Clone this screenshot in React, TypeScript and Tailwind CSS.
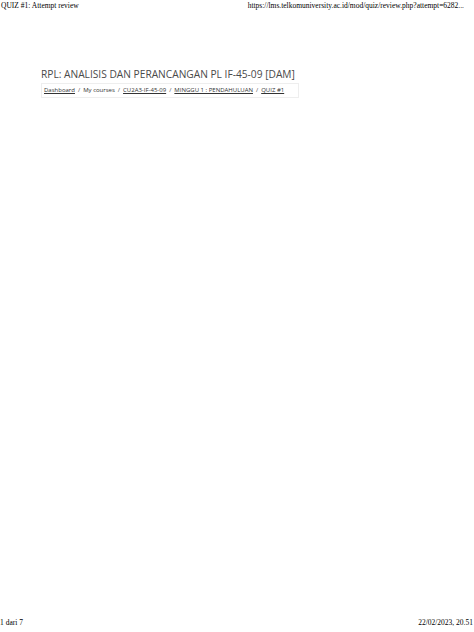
import React from 'react';

const crumbs = [
  { label: 'Dashboard', link: true },
  { label: 'My courses', link: false },
  { label: 'CU2A3-IF-45-09', link: true },
  { label: 'MINGGU 1 : PENDAHULUAN', link: true },
  { label: 'QUIZ #1', link: true },
];

export default function App() {
  return (
    <div className="h-[632px] w-[474px] bg-white flex flex-col overflow-hidden text-black">
      <div className="flex justify-between items-start h-[12px] pt-px font-['Liberation_Serif',serif] text-[7.5px] leading-[9px] whitespace-nowrap">
        <span className="pl-px">QUIZ #1: Attempt review</span>
        <span className="pr-[10px]">https://lms.telkomuniversity.ac.id/mod/quiz/review.php?attempt=6282...</span>
      </div>

      <div className="flex-1 pt-[55px] pl-[41px] font-['Open_Sans',sans-serif]">
        <h1 className="text-[10.2px] leading-[14px] text-[#4a4a4a] whitespace-nowrap">
          RPL: ANALISIS DAN PERANCANGAN PL IF-45-09 [DAM]
        </h1>
        <div className="mt-[2px] w-[258px] border border-[#eeeeee] px-[2px] py-[3px] flex items-center gap-[3px] text-[6px] leading-[7px] text-[#333] whitespace-nowrap">
          {crumbs.map((c, i) => (
            <React.Fragment key={c.label}>
              {i > 0 && <span className="text-[#555]">/</span>}
              <span className={c.link ? 'underline' : ''}>{c.label}</span>
            </React.Fragment>
          ))}
        </div>
      </div>

      <div className="flex justify-between items-end h-[16px] pb-[5px] font-['Liberation_Serif',serif] text-[7.5px] leading-[9px] whitespace-nowrap">
        <span>1 dari 7</span>
        <span className="pr-px">22/02/2023, 20.51</span>
      </div>
    </div>
  );
}
